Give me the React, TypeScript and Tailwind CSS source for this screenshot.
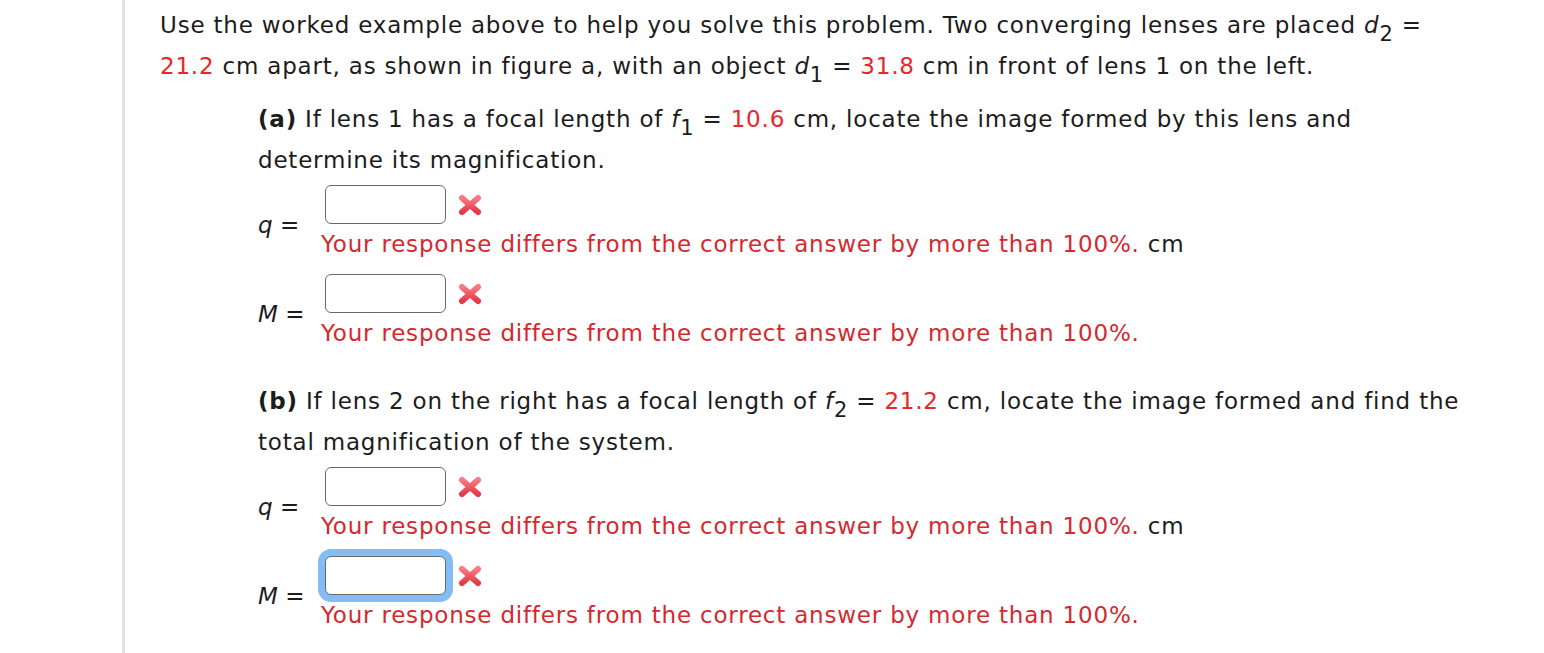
import React from 'react';

const Sub: React.FC<{ v: string; n: string }> = ({ v, n }) => (
  <span className="whitespace-nowrap">
    <i>{v}</i>
    <sub className="relative text-[21px] top-[2px] align-sub leading-none">{n}</sub>
  </span>
);

const Red: React.FC<{ children: React.ReactNode }> = ({ children }) => (
  <span className="text-[#e8272c]">{children}</span>
);

const XMark: React.FC = () => (
  <svg width="26" height="22" viewBox="0 0 26 22" className="ml-[11px]">
    <defs>
      <linearGradient id="xg" x1="0" y1="0" x2="0" y2="1">
        <stop offset="0" stopColor="#f87a82" />
        <stop offset="1" stopColor="#e43a48" />
      </linearGradient>
    </defs>
    <path d="M5 4 L21 18 M21 4 L5 18" stroke="url(#xg)" strokeWidth="6" strokeLinecap="round" />
  </svg>
);

const AnswerRow: React.FC<{ label: string; unit?: boolean; focused?: boolean }> = ({ label, unit, focused }) => (
  <div className="flex items-center">
    <div className="w-[63px] pt-[8px] tracking-normal">
      <i>{label}</i> =
    </div>
    <div className="flex flex-col">
      <div className="flex items-center h-[39px]">
        <div
          className={
            'ml-[4px] w-[121px] h-[39px] rounded-[6px] border-[1.5px] border-[#6a6a6a] bg-white ' +
            (focused ? 'shadow-[0_0_0_7px_#84bcf6]' : '')
          }
        />
        <XMark />
      </div>
      <div className="mt-[6px] leading-[28px]">
        <span className="text-[#d5282f]">Your response differs from the correct answer by more than 100%.</span>
        {unit && <span> cm</span>}
      </div>
    </div>
  </div>
);

const App: React.FC = () => {
  return (
    <div
      className="flex min-h-[653px] bg-white text-[#1c1c1c] text-[23px] leading-[41px] tracking-[0.8px]"
      style={{ fontFamily: '"DejaVu Sans", Verdana, sans-serif' }}
    >
      {/* left rule */}
      <div className="w-[122px] shrink-0" />
      <div className="w-[3px] shrink-0 bg-[#e2e2e2]" />

      <main className="flex-1 pl-[35px] pt-[5px]">
        <p>
          Use the worked example above to help you solve this problem. Two converging lenses are placed{' '}
          <Sub v="d" n="2" /> =
          <br />
          <Red>21.2</Red> cm apart, as shown in figure a, with an object <Sub v="d" n="1" /> = <Red>31.8</Red> cm in
          front of lens 1 on the left.
        </p>

        {/* part (a) */}
        <section className="pl-[98px] mt-[12px]">
          <p>
            <b>(a)</b> If lens 1 has a focal length of <Sub v="f" n="1" /> = <Red>10.6</Red> cm, locate the image
            formed by this lens and
            <br />
            determine its magnification.
          </p>
          <div className="mt-[4px] flex flex-col gap-[16px]">
            <AnswerRow label="q" unit />
            <AnswerRow label="M" />
          </div>
        </section>

        {/* part (b) */}
        <section className="pl-[98px] mt-[34px]">
          <p>
            <b>(b)</b> If lens 2 on the right has a focal length of <Sub v="f" n="2" /> = <Red>21.2</Red> cm, locate
            the image formed and find the
            <br />
            total magnification of the system.
          </p>
          <div className="mt-[4px] flex flex-col gap-[16px]">
            <AnswerRow label="q" unit />
            <AnswerRow label="M" focused />
          </div>
        </section>
      </main>
    </div>
  );
};

export default App;
